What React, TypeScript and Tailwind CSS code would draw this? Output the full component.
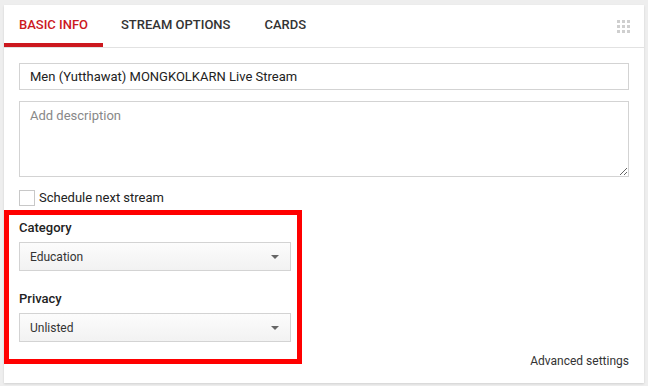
export default function App() {
  return (
    <div className="min-h-screen bg-[#eeeeee] pt-[5px] pl-[4px] font-['Roboto','Liberation_Sans',sans-serif] text-[#222]">
      <div className="w-[640px] h-[378px] bg-white shadow-[0_1px_2px_rgba(0,0,0,0.12)] flex flex-col">
        <div className="h-[43px] flex items-stretch border-b border-[#e2e2e2]">
          <div className="w-[99px] flex items-center justify-center border-b-4 border-[#cc181e] text-[13px] font-medium text-[#cc181e] pt-[2px]">
            BASIC INFO
          </div>
          <div className="ml-[18px] flex items-center pb-[2px] text-[13px] font-medium text-[#333]">
            STREAM OPTIONS
          </div>
          <div className="ml-[34px] flex items-center pb-[2px] text-[13px] font-medium text-[#333]">
            CARDS
          </div>
          <div className="ml-auto mr-[14px] self-center grid grid-cols-3 gap-[2px]">
            {Array.from({ length: 9 }).map((_, i) => (
              <span key={i} className="w-[3px] h-[3px] bg-[#cfcfcf]" />
            ))}
          </div>
        </div>

        <div className="flex-1 flex flex-col px-[15px] pt-[15px]">
          <div className="h-[27px] border border-[#d3d3d3] px-[10px] flex items-center text-[13px] text-[#222]">
            Men (Yutthawat) MONGKOLKARN Live Stream
          </div>
          <textarea
            className="mt-[11px] h-[76px] border border-[#d3d3d3] px-[10px] pt-[5px] text-[13px] leading-[18px] placeholder:text-[#888] outline-none"
            placeholder="Add description"
          />
          <div className="mt-[13px] h-[16px] flex items-center">
            <span className="w-[16px] h-[16px] border border-[#c8c8c8] bg-white" />
            <span className="ml-[4px] text-[13px] leading-[16px] text-[#222]">Schedule next stream</span>
          </div>

          <div className="flex items-end justify-between">
            <div className="mt-[4px] ml-[-15px] w-[298px] border-[5px] border-[#ff0000] pt-[4px] pl-[10px] pb-[17px]">
              <div className="text-[13px] leading-[18px] font-medium text-[#222]">Category</div>
              <div className="mt-[5px] w-[272px] h-[29px] border border-[#d3d3d3] bg-gradient-to-b from-[#fcfcfc] to-[#f2f2f2] px-[10px] flex items-center justify-between">
                <span className="text-[12px] text-[#333]">Education</span>
                <span className="w-0 h-0 border-l-[4px] border-r-[4px] border-t-[4px] border-l-transparent border-r-transparent border-t-[#666] mr-[1px]" />
              </div>
              <div className="mt-[19px] text-[13px] leading-[18px] font-medium text-[#222]">Privacy</div>
              <div className="mt-[5px] w-[272px] h-[29px] border border-[#d3d3d3] bg-gradient-to-b from-[#fcfcfc] to-[#f2f2f2] px-[10px] flex items-center justify-between">
                <span className="text-[12px] text-[#333]">Unlisted</span>
                <span className="w-0 h-0 border-l-[4px] border-r-[4px] border-t-[4px] border-l-transparent border-r-transparent border-t-[#666] mr-[1px]" />
              </div>
            </div>
            <div className="mb-[-5px] text-[12px] leading-[16px] text-[#333]">Advanced settings</div>
          </div>
        </div>
      </div>
    </div>
  )
}
